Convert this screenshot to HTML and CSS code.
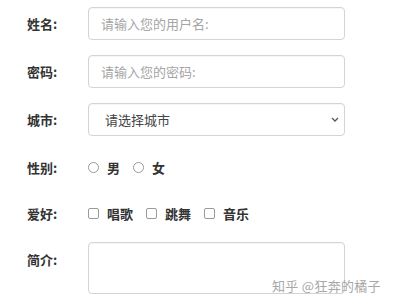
FILE: index.html
```html
<!DOCTYPE html>
<html lang="zh">
<head>
<meta charset="utf-8">
<link rel="stylesheet" href="styles.css">
</head>
<body>
<form class="form">
  <div class="row">
    <label class="label">姓名:</label>
    <input class="control" type="text" placeholder="请输入您的用户名:">
  </div>
  <div class="row">
    <label class="label">密码:</label>
    <input class="control" type="password" placeholder="请输入您的密码:">
  </div>
  <div class="row">
    <label class="label">城市:</label>
    <div class="select-wrap">
      <select class="control select">
        <option>请选择城市</option>
      </select>
      <svg class="chev" width="8" height="5" viewBox="0 0 8 5"><path d="M1 1 L4 4 L7 1" fill="none" stroke="#555" stroke-width="1.3"/></svg>
    </div>
  </div>
  <div class="row row-opt">
    <label class="label">性别:</label>
    <div class="opts">
      <label class="opt"><input class="radio" type="radio" name="sex"><span>男</span></label>
      <label class="opt"><input class="radio" type="radio" name="sex"><span>女</span></label>
    </div>
  </div>
  <div class="row row-opt row-hobby">
    <label class="label">爱好:</label>
    <div class="opts">
      <label class="opt"><input class="check" type="checkbox"><span>唱歌</span></label>
      <label class="opt"><input class="check" type="checkbox"><span>跳舞</span></label>
      <label class="opt"><input class="check" type="checkbox"><span>音乐</span></label>
    </div>
  </div>
  <div class="row row-top">
    <label class="label label-top">简介:</label>
    <textarea class="control area"></textarea>
  </div>
</form>
<div class="watermark">知乎 @狂奔的橘子</div>
</body>
</html>
```
FILE: styles.css
```css
html, body {
  margin: 0;
  padding: 0;
  background: #fff;
  font-family: "Noto Sans CJK SC", "Noto Sans", sans-serif;
  color: #333;
  overflow: hidden;
}
.form {
  padding-top: 7px;
}
.row {
  display: flex;
  align-items: center;
  height: 33px;
  margin-bottom: 15px;
}
.row-opt {
  margin-bottom: 13px;
}
.row-hobby {
  margin-bottom: 12px;
}
.row-top {
  align-items: flex-start;
  height: auto;
}
.label {
  box-sizing: border-box;
  width: 88px;
  padding-left: 27px;
  font-size: 13px;
  font-weight: bold;
  color: #333;
}
.label-top {
  padding-top: 8px;
}
.control {
  box-sizing: border-box;
  width: 257px;
  height: 33px;
  border: 1px solid #d4d4d4;
  border-radius: 4px;
  padding: 0 12px;
  font-family: "Noto Sans CJK SC", "Noto Sans", sans-serif;
  font-size: 13px;
  color: #555;
  background: #fff;
  box-shadow: inset 0 1px 1px rgba(0,0,0,0.04);
  outline: none;
}
.control::placeholder {
  color: #a5a5a5;
}
.select-wrap {
  position: relative;
  display: flex;
}
.select {
  appearance: none;
  -webkit-appearance: none;
  padding-left: 16px;
  color: #444;
}
.chev {
  position: absolute;
  right: 6px;
  top: 14px;
  pointer-events: none;
}
.area {
  height: 52px;
  resize: none;
}
.opts {
  display: flex;
  align-items: center;
  gap: 13px;
}
.opt {
  display: flex;
  align-items: center;
  font-size: 13px;
  font-weight: bold;
  color: #333;
}
.radio, .check {
  appearance: none;
  -webkit-appearance: none;
  box-sizing: border-box;
  width: 11px;
  height: 11px;
  margin: 0 8px 0 0;
  border: 1px solid #9a9a9a;
  background: #fff;
}
.radio {
  border-radius: 50%;
}
.check {
  border-radius: 2px;
}
.watermark {
  position: absolute;
  left: 272px;
  top: 276px;
  font-size: 13px;
  color: #a8a8a8;
  letter-spacing: 0.3px;
}
```
